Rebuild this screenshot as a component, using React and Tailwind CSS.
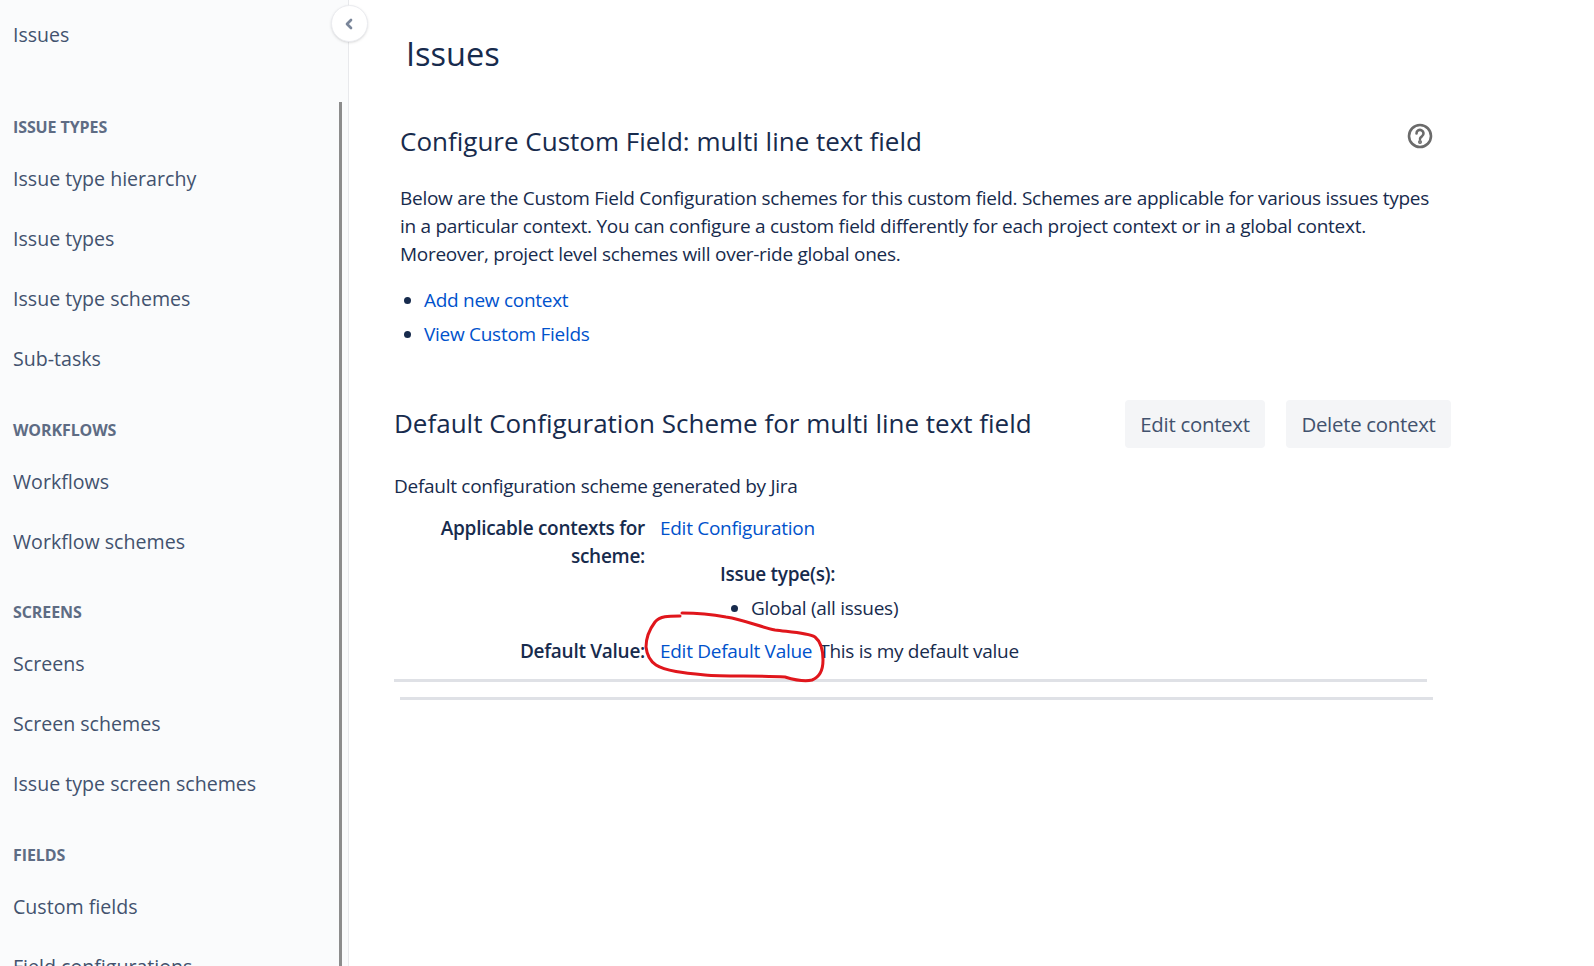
import { ChevronLeft } from 'lucide-react';

const font = { fontFamily: '"Open Sans", "Noto Sans", sans-serif' };

const groups = [
  { title: 'ISSUE TYPES', items: ['Issue type hierarchy', 'Issue types', 'Issue type schemes', 'Sub-tasks'] },
  { title: 'WORKFLOWS', items: ['Workflows', 'Workflow schemes'] },
  { title: 'SCREENS', items: ['Screens', 'Screen schemes', 'Issue type screen schemes'] },
  { title: 'FIELDS', items: ['Custom fields', 'Field configurations'] },
];

function Sidebar() {
  return (
    <aside className="relative w-[349px] h-full shrink-0 bg-[#fafbfc] border-r border-[#e8e9ec]">
      <div className="h-full overflow-hidden pl-[13px]">
        <div className="h-[70px] flex items-center text-[19.5px] font-medium text-[#42526e]">Issues</div>
        <div className="h-[47px]" />
        {groups.map(group => (
          <div key={group.title} className="mb-[30.5px]">
            <h3 className="h-[20px] mb-[11.5px] flex items-center text-[16px] font-bold tracking-[-0.1px] text-[#5e6c84]">{group.title}</h3>
            {group.items.map(item => (
              <div key={item} className="h-[60.2px] flex items-center text-[19.6px] text-[#42526e]">{item}</div>
            ))}
          </div>
        ))}
      </div>
      <div className="absolute left-[339px] top-[102px] bottom-0 w-[3px] bg-[#8c8c8c]" />
      <button type="button" className="absolute left-[331px] top-[5px] w-[37px] h-[37px] rounded-full bg-white border border-[#ebecf0] shadow-sm flex items-center justify-center text-[#7a869a]">
        <ChevronLeft size={16} strokeWidth={4} className="mr-[2px]" />
      </button>
    </aside>
  );
}

function Annotation() {
  return (
    <svg className="absolute left-0 top-0 pointer-events-none" width="1594" height="966" fill="none" stroke="#e0161c" strokeWidth="3" strokeLinecap="round">
      <path d="M680 616 C668 616 660 616 655 622 C649 630 646 638 646 647 C647 656 650 661 656 665 C665 671 684 673 705 675 C725 677 760 675 785 677 C795 680 805 682 812 680 C820 677 823 670 823 660 C823 650 820 641 815 637 C808 633 790 632 775 630 C760 627 745 620 726 617 C710 614 695 613 682 613" />
    </svg>
  );
}

export default function App() {
  return (
    <div style={font} className="relative flex w-[1594px] h-[966px] overflow-hidden bg-white text-[#172b4d]">
      <Sidebar />
      <main className="flex-1 pt-[34px] text-[19px] tracking-[-0.28px] leading-[28px]">
        <h1 className="pl-[57px] text-[32.5px] tracking-normal leading-[40px]">Issues</h1>

        <div className="mt-[49px] pl-[51px] pr-[145px] flex items-start justify-between">
          <h2 className="text-[26px] tracking-normal leading-[36px]">Configure Custom Field: multi line text field</h2>
          <svg className="mt-[0px] mr-[16px]" width="26" height="26" viewBox="0 0 26 26" fill="none" stroke="#6b6b6b" strokeWidth="2.6">
            <circle cx="13" cy="13" r="11" />
            <path d="M9.5 10.5a3.5 3.5 0 1 1 5.5 2.8c-1.2.8-2 1.3-2 2.7" strokeLinecap="round" />
            <circle cx="13" cy="19" r="0.7" fill="#6b6b6b" />
          </svg>
        </div>

        <p className="mt-[25px] pl-[51px] whitespace-nowrap">
          Below are the Custom Field Configuration schemes for this custom field. Schemes are applicable for various issues types<br />
          in a particular context. You can configure a custom field differently for each project context or in a global context.<br />
          Moreover, project level schemes will over-ride global ones.
        </p>

        <ul className="mt-[15px] pl-[75px] list-disc leading-[34px]">
          <li><a className="text-[#0052cc]">Add new context</a></li>
          <li><a className="text-[#0052cc]">View Custom Fields</a></li>
        </ul>

        <div className="mt-[47px] pl-[45px] pr-[143px] flex items-center justify-between">
          <h2 className="text-[26px] tracking-normal leading-[36px]">Default Configuration Scheme for multi line text field</h2>
          <div className="mt-[2px] flex gap-[21px] text-[#42526e] text-[20.4px]">
            <button type="button" className="h-[48px] w-[140px] rounded-[4px] bg-[#f4f5f7]">Edit context</button>
            <button type="button" className="h-[48px] w-[165px] rounded-[4px] bg-[#f4f5f7]">Delete context</button>
          </div>
        </div>

        <p className="mt-[24px] pl-[45px]">Default configuration scheme generated by Jira</p>

        <div className="mt-[14px] ml-[45px] grid grid-cols-[251px_1fr] gap-x-[15px]">
          <div className="text-right font-semibold">Applicable contexts for<br />scheme:</div>
          <div>
            <a className="text-[#0052cc]">Edit Configuration</a>
            <div className="mt-[18px] ml-[60px] font-semibold">Issue type(s):</div>
            <ul className="mt-[6px] ml-[91px] list-disc"><li>Global (all issues)</li></ul>
          </div>
          <div className="mt-[15px] text-right font-semibold">Default Value:</div>
          <div className="mt-[15px] flex gap-[7px]">
            <a className="text-[#0052cc]">Edit Default Value</a>
            <span>This is my default value</span>
          </div>
        </div>

        <div className="mt-[14px] ml-[45px] w-[1033px] h-[3px] bg-[#dfe1e6]" />
        <div className="mt-[15px] ml-[51px] w-[1033px] h-[3px] bg-[#dfe1e6]" />
      </main>
      <Annotation />
    </div>
  );
}
